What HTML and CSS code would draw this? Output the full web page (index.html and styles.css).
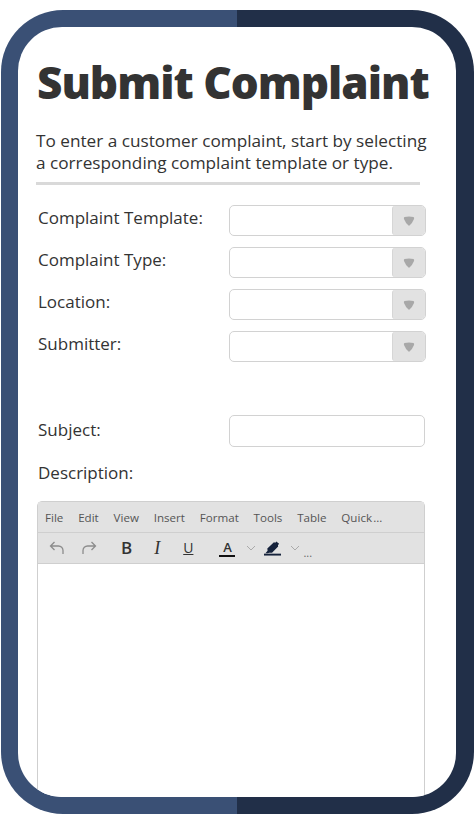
FILE: index.html
```html
<!DOCTYPE html>
<html lang="en">
<head>
    <meta charset="UTF-8">
    <meta name="viewport" content="width=device-width, initial-scale=1.0">
    <title>Submit Complaint</title>
    <link rel="stylesheet" href="styles.css">
</head>
<body>

    <!-- phone frame -->
    <div class="frame">
        <div class="screen">
            <h1>Submit Complaint</h1>
            <p class="intro">To enter a customer complaint, start by selecting a corresponding complaint template or type.</p>
            <hr class="rule">

            <div class="row row-first">
                <label>Complaint Template:</label>
                <div class="select"><span class="select-btn"><svg viewBox="0 0 12 10" class="arrow"><path d="M1.500 1Q6 0 10.500 1Q11.500 1.500 11 3Q9.500 7 6.500 9.500Q6 9.800 5.500 9.500Q2.500 7 1 3Q.5 1.500 1.500 1Z"/></svg></span></div>
            </div>
            <div class="row">
                <label>Complaint Type:</label>
                <div class="select"><span class="select-btn"><svg viewBox="0 0 12 10" class="arrow"><path d="M1.500 1Q6 0 10.500 1Q11.500 1.500 11 3Q9.500 7 6.500 9.500Q6 9.800 5.500 9.500Q2.500 7 1 3Q.5 1.500 1.500 1Z"/></svg></span></div>
            </div>
            <div class="row">
                <label>Location:</label>
                <div class="select"><span class="select-btn"><svg viewBox="0 0 12 10" class="arrow"><path d="M1.500 1Q6 0 10.500 1Q11.500 1.500 11 3Q9.500 7 6.500 9.500Q6 9.800 5.500 9.500Q2.500 7 1 3Q.5 1.500 1.500 1Z"/></svg></span></div>
            </div>
            <div class="row">
                <label>Submitter:</label>
                <div class="select"><span class="select-btn"><svg viewBox="0 0 12 10" class="arrow"><path d="M1.500 1Q6 0 10.500 1Q11.500 1.500 11 3Q9.500 7 6.500 9.500Q6 9.800 5.500 9.500Q2.500 7 1 3Q.5 1.500 1.500 1Z"/></svg></span></div>
            </div>

            <div class="row row-subject">
                <label class="label-subject">Subject:</label>
                <div class="text-input"></div>
            </div>
            <div class="desc-label">Description:</div>

            <!-- editor -->
            <div class="editor">
                <div class="menubar">
                    <span>File</span><span>Edit</span><span>View</span><span>Insert</span><span>Format</span><span>Tools</span><span>Table</span><span>Quick&#8202;...</span>
                </div>
                <div class="toolbar">
                    <svg class="tool tool-undo" viewBox="0 0 16 16"><path d="M5.500 2 1.500 6l4 4M1.500 6H9.500a4.500 4.500 0 0 1 4.500 4.500V14"/></svg>
                    <svg class="tool tool-redo" viewBox="0 0 16 16"><path d="M10.500 2l4 4-4 4M14.500 6H6.500A4.500 4.500 0 0 0 2 10.500V14"/></svg>
                    <span class="fmt fmt-b">B</span>
                    <span class="fmt fmt-i">I</span>
                    <span class="fmt fmt-u">U</span>
                    <span class="fmt fmt-a">A</span>
                    <svg class="chev chev-a" viewBox="0 0 10 6"><path d="M1 1l4 4 4-4"/></svg>
                    <svg class="marker" viewBox="0 0 18 16"><path d="M3.500 8.500 10.500 2l1.500.5 1-1.500 3 2.500-1.300 1.500.3 1.500-6.500 6.500H5.500L4 13.500H1.500L3.800 11z"/><rect x="0" y="14" width="18" height="2"/></svg>
                    <svg class="chev chev-m" viewBox="0 0 10 6"><path d="M1 1l4 4 4-4"/></svg>
                    <span class="more">...</span>
                </div>
                <div class="editor-body"></div>
            </div>
        </div>
    </div>

</body>
</html>
```

FILE: styles.css
```css
body {
    margin: 0;
    height: 823px;
    overflow: hidden;
    background: #fff;
    font-family: "Open Sans", "Noto Sans", sans-serif;
    color: #333;
}

/* phone frame */
.frame {
    margin: 10px 0 0 1px;
    height: 804px;
    padding: 17px 18px 17px 17px;
    box-sizing: border-box;
    border-radius: 62px;
    background: linear-gradient(90deg, #3a5075 236px, #212f48 236px);
}

.screen {
    height: 100%;
    box-sizing: border-box;
    padding: 27px 0 0 19px;
    border-radius: 44px;
    background: #fff;
    overflow: hidden;
}

h1 {
    margin: 0;
    font-family: "Noto Sans", "Open Sans", sans-serif;
    font-size: 44px;
    line-height: 56px;
    font-weight: 900;
    letter-spacing: -1px;
    white-space: nowrap;
    color: #333;
}

.intro {
    margin: 20px 0 0 -1px;
    width: 400px;
    font-size: 17.200px;
    line-height: 22px;
}

.rule {
    margin: 8px 0 0 -1px;
    width: 384px;
    height: 3px;
    border: 0;
    background: #d9d9d9;
}

/* form rows */
.row {
    display: flex;
    align-items: flex-start;
    height: 31px;
    margin-top: 11px;
}

.row-first {
    margin-top: 20px;
}

.row-subject {
    margin-top: 53px;
    height: 32px;
}

label,
.desc-label {
    width: 191px;
    margin-left: 1px;
    font-size: 17px;
    line-height: 26px;
}

.label-subject {
    margin-top: 2px;
}

.select,
.text-input {
    display: flex;
    justify-content: flex-end;
    width: 197px;
    height: 31px;
    box-sizing: border-box;
    border: 1px solid #d2d2d2;
    border-radius: 5px;
    background: #fff;
}

.text-input {
    width: 196px;
    height: 32px;
}

.select-btn {
    display: flex;
    align-items: center;
    justify-content: center;
    width: 32px;
    border-left: 1px solid #d6d6d6;
    border-radius: 3px 4px 4px 3px;
    background: #e2e2e2;
}

.arrow {
    width: 12px;
    height: 10px;
    fill: #a8a8a8;
}

.desc-label {
    margin-top: 13px;
}

/* editor */
.editor {
    margin: 15px 0 0;
    width: 388px;
    height: 400px;
    box-sizing: border-box;
    border: 1px solid #cfcfcf;
    border-radius: 5px 5px 0 0;
}

.menubar {
    display: flex;
    align-items: center;
    gap: 14.800px;
    height: 30px;
    padding-left: 7px;
    border-bottom: 1px solid #cfcfcf;
    background: #e2e2e2;
    font-size: 11.600px;
    color: #555;
}

.toolbar {
    display: flex;
    align-items: center;
    height: 30px;
    padding-left: 11px;
    border-bottom: 1px solid #cfcfcf;
    background: #e2e2e2;
}

.tool {
    width: 16px;
    height: 16px;
    fill: none;
    stroke: #8c8c8c;
    stroke-width: 1.300;
}

.tool-redo {
    margin-left: 16px;
}

.fmt {
    font-size: 16px;
    line-height: 20px;
    color: #333;
}

.fmt-b {
    margin-left: 24px;
    font-size: 17px;
    font-weight: 600;
}

.fmt-i {
    margin-left: 22px;
    font-family: "Liberation Serif", serif;
    font-size: 18px;
    font-style: italic;
}

.fmt-u {
    margin-left: 23px;
    font-size: 14px;
    text-decoration: underline;
}

.fmt-a {
    margin-left: 26px;
    width: 16px;
    font-size: 13px;
    line-height: 15px;
    font-weight: 600;
    text-align: center;
    border-bottom: 2.500px solid #111;
}

.chev {
    width: 10px;
    height: 6px;
    fill: none;
    stroke: #aaa;
}

.chev-a {
    margin-left: 11px;
}

.marker {
    margin-left: 8px;
    width: 17px;
    height: 16px;
    fill: #16233c;
}

.chev-m {
    margin-left: 9px;
}

.more {
    margin: 9px 0 0 3px;
    font-size: 11px;
    line-height: 12px;
    color: #666;
}

.editor-body {
    height: 340px;
    background: #fff;
}
```
